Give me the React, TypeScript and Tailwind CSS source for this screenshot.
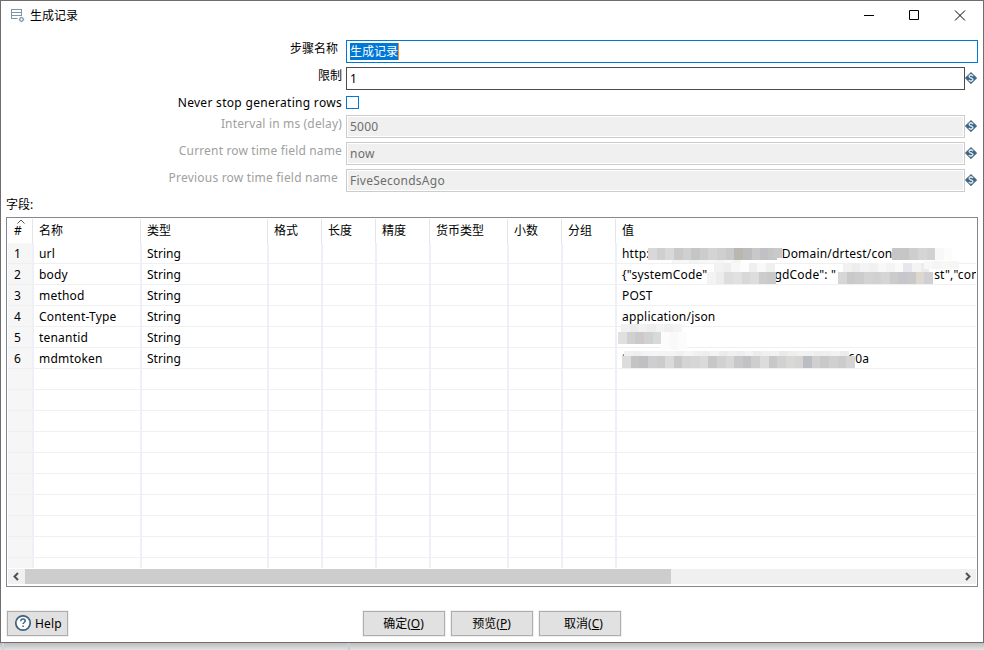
import React from "react";

const FONT = "font-['Noto_Sans','Noto_Sans_CJK_SC',sans-serif]";

interface Column {
  title: string;
  width: string;
}

const columns: Column[] = [
  { title: "名称", width: "w-[108px]" },
  { title: "类型", width: "w-[127px]" },
  { title: "格式", width: "w-[54px]" },
  { title: "长度", width: "w-[54px]" },
  { title: "精度", width: "w-[54px]" },
  { title: "货币类型", width: "w-[78px]" },
  { title: "小数", width: "w-[54px]" },
  { title: "分组", width: "w-[54px]" },
];

// a number is a hidden stretch of that many pixels
type Piece = string | number;

interface Row {
  name: string;
  type: string;
  value: Piece[];
}

const rows: Row[] = [
  { name: "url", type: "String", value: ["http:", 132, "Domain/drtest/con"] },
  { name: "body", type: "String", value: ['{"systemCode"', 67, 'gdCode": "', 98, 'st","con'] },
  { name: "method", type: "String", value: ["POST"] },
  { name: "Content-Type", type: "String", value: ["application/json"] },
  { name: "tenantid", type: "String", value: [] },
  { name: "mdmtoken", type: "String", value: ["2", 219, "60a"] },
];

const emptyRows = Array.from({ length: 9 });

const VariableIcon = () => (
  <svg width="13" height="13" viewBox="0 0 13 13" className="-ml-px shrink-0">
    <path d="M7 .5 12.700 6 7 11.700 1.300 6Z" fill="#3d6480" stroke="#3d6480" strokeWidth=".8" strokeLinejoin="round" />
    <path
      d="M9 4.200C8.700 3.400 8 3 7 3c-1.200 0-1.900.6-1.900 1.400C5.100 6.500 9 5.500 9 7.600 9 8.500 8.200 9 7 9c-1.100 0-1.900-.4-2.100-1.200"
      fill="none"
      stroke="#dbe5ec"
      strokeWidth="1.300"
    />
    <path d="M7 2v1M7 9v1" stroke="#dbe5ec" strokeWidth="1" />
  </svg>
);

const TitleIcon = () => (
  <svg width="14" height="14" viewBox="0 0 14 14" fill="none" stroke="#7d97aa" strokeWidth="1">
    <path d="M.5 0v10M.5.5h10M10.500 0v7M.5 3.500h10M.5 6.500h10M.5 9.500h6" />
    <circle cx="10.500" cy="10.500" r="1.800" strokeWidth="1.300" />
    <path d="M10.500 7.800v1M10.500 12.200v1M7.800 10.500h1M12.200 10.500h1" />
  </svg>
);

interface FieldProps {
  label: string;
  value: string;
  labelClass?: string;
  disabled?: boolean;
}

const Field: React.FC<FieldProps> = ({ label, value, labelClass = "", disabled = false }) => (
  <div className="flex h-[23px] mb-1">
    <div
      className={`w-[341px] shrink-0 text-right whitespace-nowrap ${
        disabled ? "leading-[17px] text-[#a0a0a0]" : "leading-[18px] text-black"
      } ${labelClass}`}
    >
      {label}
    </div>
    <div
      className={`ml-[4px] w-[619px] border px-[3px] leading-[21px] tracking-[0.25px] ${
        disabled
          ? "border-[#cccccc] bg-[#f0f0f0] text-[#6d6d6d] shadow-[inset_0_0_0_1px_#fff]"
          : "border-[#4c4c4c] bg-white text-black"
      }`}
    >
      {value}
    </div>
    <div className="flex items-center">
      <VariableIcon />
    </div>
  </div>
);

interface Strip {
  x: number;
  y: number;
  h: number;
  cells: string[];
}

const strips: Strip[] = [
  { x: 31, y: 5, h: 12, cells: ["#d8d8d8", "#cfcfcf", "#d8d8d8", "#c9c9c9", "#d0d0d0", "#c5c5c5", "#cccccc", "#d4d4d4", "#cfcfcf", "#c9c9c9", "#bab7b0", "#bcbcbc", "#c8c8c8", "#c1c1c5"] },
  { x: 151, y: 5, h: 12, cells: ["#c5c5c5"] },
  { x: 156, y: 5, h: 10, cells: ["#c9c9c9"] },
  { x: 275, y: 5, h: 12, cells: ["#c6c6c6", "#c6c6c6", "#cecece", "#d5d5d5", "#d1d1d1"] },
  { x: 318, y: 5, h: 12, cells: ["#f8f8f8", "#fcfcfc"] },
  { x: 55, y: 17, h: 3, cells: ["#f6f6f6", "#f8f8f8", "#f3f3f3", "#f7f7f7", "#f9f9f9", "#f6f6f6", "#fafafa", "#f5f5f5"] },
  { x: 97, y: 20, h: 9, cells: ["#f2f2f2", "#eeeeee", "#f8f8f8", "#fdfdfd", "#efefef", "#f9f9f9", "#f0f0f0"] },
  { x: 90, y: 29, h: 12, cells: ["#f3f3f3", "#ececec", "#dddddd", "#e1e1e1", "#d8d8d8", "#dddddd", "#cccccc", "#c9c9c9"] },
  { x: 226, y: 20, h: 9, cells: ["#f1f1f1", "#ededed", "#f4f4f4", "#f1f1f1", "#f8f8f8", "#f4f4f4", "#fafafa", "#e6e6ed", "#f4f4f4", "#ececec"] },
  { x: 221, y: 29, h: 12, cells: ["#d6d6d6", "#c9c9c9", "#cccccc", "#d3d3d3", "#d1d1d1", "#d5d5d5", "#cbcbcb", "#c6c6cc", "#c9c9c9", "#ddd7d1", "#d0d0d4"] },
  { x: 307, y: 18, h: 8, cells: ["#f8f8f8", "#f5f5f5", "#f8f8f5", "#f6f6f6"] },
  { x: 4, y: 81, h: 9, cells: ["#f1f1f1", "#ececec", "#f2f2f2", "#eeeeee", "#f3f3f3", "#efefef", "#f3f3f3"] },
  { x: 1, y: 89, h: 12, cells: ["#e0e0e0", "#d0d0d2", "#cdc9c9", "#d1d1d1", "#d6dada"] },
  { x: 44, y: 89, h: 18, cells: ["#fcfcfc", "#f9f9f9", "#fcfcfc"] },
  { x: 7, y: 108, h: 6, cells: ["#f1f1f1", "#efefef", "#f3f3f3", "#f5f5f5", "#f4f4f4", "#f4f4f4", "#f1f1f1", "#f5f5f5", "#f0f0f0", "#eeeeee", "#f4f4f4", "#ececec", "#f0f0f0", "#eeeeee", "#f3f3f3", "#ececec", "#f0f0f0", "#f2f2f2", "#eaeaea", "#eeeeee", "#f2f2f2", "#f1f1f1", "#eeeeee", "#efefef", "#f2f2f2", "#ececec"] },
  { x: 5, y: 113, h: 12, cells: ["#dcdcdc", "#c4c4c4", "#c0c0c2", "#cecece", "#cbcbcb", "#dadada", "#c8c8c8", "#d4d4d4", "#d6d6d6", "#dadada", "#c7c7c7", "#d2d0d0", "#d8d8d8", "#c8c8c8", "#c2c2c4", "#cecece", "#dcdcdc", "#c8c8c8", "#d1d1d1", "#d8d8d6", "#d5d5d5", "#babec2", "#d0d0d0", "#c9c9c9", "#d0d0d0", "#cccccc", "#d4d4d4"] },
];

const Mosaic = () => (
  <svg className="absolute left-[609px] top-0" width="360" height="150" viewBox="0 0 360 150" shapeRendering="crispEdges">
    {strips.map((strip, s) =>
      strip.cells.map((color, i) => (
        <rect
          key={`${s}-${i}`}
          x={strip.x + i * 8.63}
          y={strip.y}
          width={8.8}
          height={strip.h}
          fill={color}
        />
      ))
    )}
  </svg>
);

const Cell: React.FC<{ width: string; children?: React.ReactNode }> = ({ width, children }) => (
  <div className={`${width} shrink-0 border-l-2 border-[#edf0f7] pl-[5px] whitespace-nowrap`}>{children}</div>
);

const TableRow: React.FC<{ index?: number; row?: Row; last?: boolean }> = ({ index, row, last = false }) => (
  <div className={`flex ${last ? "h-[10px]" : "h-[21px]"} leading-[21px]`}>
    <div className={`w-[24px] shrink-0 pl-[6px] bg-[#f6f6f6] ${last ? "" : "border-b border-[#f0f0f0]"}`}>
      {index}
    </div>
    <div className={`flex grow ${last ? "" : "border-b border-[#f0f0f0]"}`}>
      <Cell width="w-[108px] tracking-[0.2px]">{row?.name}</Cell>
      <Cell width="w-[127px]">{row?.type}</Cell>
      {columns.slice(2).map((c) => (
        <Cell key={c.title} width={c.width} />
      ))}
      <div className="flex w-[361px] overflow-hidden border-l-2 border-[#edf0f7] pl-[5px] tracking-[0.2px] whitespace-nowrap">
        {row?.value.map((piece, i) =>
          typeof piece === "number" ? (
            <span key={i} className="shrink-0" style={{ width: piece }} />
          ) : (
            <span key={i}>{piece}</span>
          )
        )}
      </div>
    </div>
  </div>
);

const Button: React.FC<{ text: string; mnemonic: string; className?: string }> = ({
  text,
  mnemonic,
  className = "",
}) => (
  <button
    className={`h-[25px] w-[82px] border border-[#adadad] bg-[#e1e1e1] leading-[23px] outline outline-[#f0f0f0] ${className}`}
  >
    {text}(<span className="underline underline-offset-1">{mnemonic}</span>)
  </button>
);

const App = () => (
  <div className={`h-[650px] w-[984px] overflow-hidden bg-[#e3e3e3] text-[12px] text-black ${FONT}`}>
    <div className="flex h-[643px] flex-col border border-[#6f6f6f] bg-white">
      {/* title bar */}
      <div className="flex h-[29px] shrink-0 items-center pl-[10px] pr-[17px]">
        <TitleIcon />
        <span className="ml-[5px] grow">生成记录</span>
        <svg width="102" height="11" viewBox="0 0 102 11" fill="none" stroke="#000" strokeWidth="1">
          <path d="M0 5.500h10M45.500.5h9v9h-9z" />
          <path d="M91 .5l10 10M101 .5l-10 10" />
        </svg>
      </div>

      {/* step settings */}
      <div className="mt-[10px] flex h-[23px] shrink-0">
        <div className="w-[337px] text-right leading-[18px]">步骤名称</div>
        <div className="ml-[8px] flex w-[632px] items-center border border-[#0078d7] pl-[3px]">
          <span className="h-[17px] border-r border-[#ff8728] bg-[#0078d7] leading-[18px] text-white">
            生成记录
          </span>
        </div>
      </div>
      <div className="mt-1 shrink-0">
        <Field label="限制" value="1" />
        <div className="mb-[3px] flex h-[18px] items-start">
          <div className="w-[341px] text-right leading-[18px] tracking-[0.3px]">Never stop generating rows</div>
          <div className="ml-[4px] mt-[2px] h-[13px] w-[13px] border border-[#0078d7]" />
        </div>
        <Field label="Interval in ms (delay)" value="5000" labelClass="tracking-[0.16px]" disabled />
        <Field label="Current row time field name" value="now" labelClass="tracking-[0.16px]" disabled />
        <Field
          label="Previous row time field name"
          value="FiveSecondsAgo"
          labelClass="pr-[4px] tracking-[0.2px]"
          disabled
        />
      </div>

      {/* fields table */}
      <div className="h-[21px] shrink-0 pl-[5px] leading-[18px]">字段:</div>
      <div className="ml-[5px] h-[370px] w-[972px] shrink-0 border border-[#828790] px-[1px]">
        <div className="flex h-[25px] pt-px">
          <div className="relative w-[24px] shrink-0 pl-[6px] leading-[24px]">
            #
            <svg className="absolute left-[9px] top-0" width="8" height="5" fill="none" stroke="#555">
              <path d="M.5 4.500 4 1l3.500 3.500" />
            </svg>
          </div>
          {columns.map((c) => (
            <div key={c.title} className={`${c.width} shrink-0 border-l border-[#e5e5e5] pl-[6px] leading-[24px]`}>
              {c.title}
            </div>
          ))}
          <div className="border-l border-[#e5e5e5] pl-[6px] leading-[24px]">值</div>
        </div>
        <div className="relative h-[326px]">
          {rows.map((row, i) => (
            <TableRow key={row.name} index={i + 1} row={row} />
          ))}
          {emptyRows.map((_, i) => (
            <TableRow key={i} />
          ))}
          <TableRow last />
          <Mosaic />
        </div>
        <div className="flex h-[15px] items-center bg-[#f0f0f0]">
          <svg width="17" height="15" fill="none" stroke="#505050" strokeWidth="2">
            <path d="M10 4 6.500 7.500 10 11" />
          </svg>
          <div className="h-[15px] w-[646px] bg-[#cdcdcd]" />
          <div className="grow" />
          <svg width="17" height="15" fill="none" stroke="#505050" strokeWidth="2">
            <path d="M7 4l3.500 3.500L7 11" />
          </svg>
        </div>
      </div>

      {/* buttons */}
      <div className="mt-[24px] flex pl-[6px]">
        <button className="flex h-[25px] w-[61px] items-center border border-[#adadad] bg-[#e1e1e1] pl-[7px] outline outline-[#f0f0f0]">
          <svg width="17" height="17" viewBox="0 0 17 17" fill="none">
            <circle cx="8" cy="8" r="7.200" fill="#fff" stroke="#3d6480" strokeWidth="1.700" />
            <path d="M5.800 6.300c0-1.500 1-2.200 2.200-2.200s2.200.8 2.200 2c0 1.400-2.100 1.400-2.100 3M8.100 10.500V12" stroke="#3d6480" strokeWidth="1.500" />
          </svg>
          <span className="ml-[3px] tracking-[0.2px]">Help</span>
        </button>
        <div className="ml-[295px] flex gap-[6px]">
          <Button text="确定" mnemonic="O" className="pr-px" />
          <Button text="预览" mnemonic="P" className="pr-px" />
          <Button text="取消" mnemonic="C" className="pl-[7px]" />
        </div>
      </div>
    </div>
    {/* window shadow over the desktop behind */}
    <div className="flex h-[7px] bg-linear-to-b from-[#bdbdbd] to-[#e2e2e2]">
      <div className="ml-[2px] w-[2px] bg-[#ccd4dd]" />
      <div className="ml-[344px] w-[2px] bg-[#c6cdd6]" />
    </div>
  </div>
);

export default App;
